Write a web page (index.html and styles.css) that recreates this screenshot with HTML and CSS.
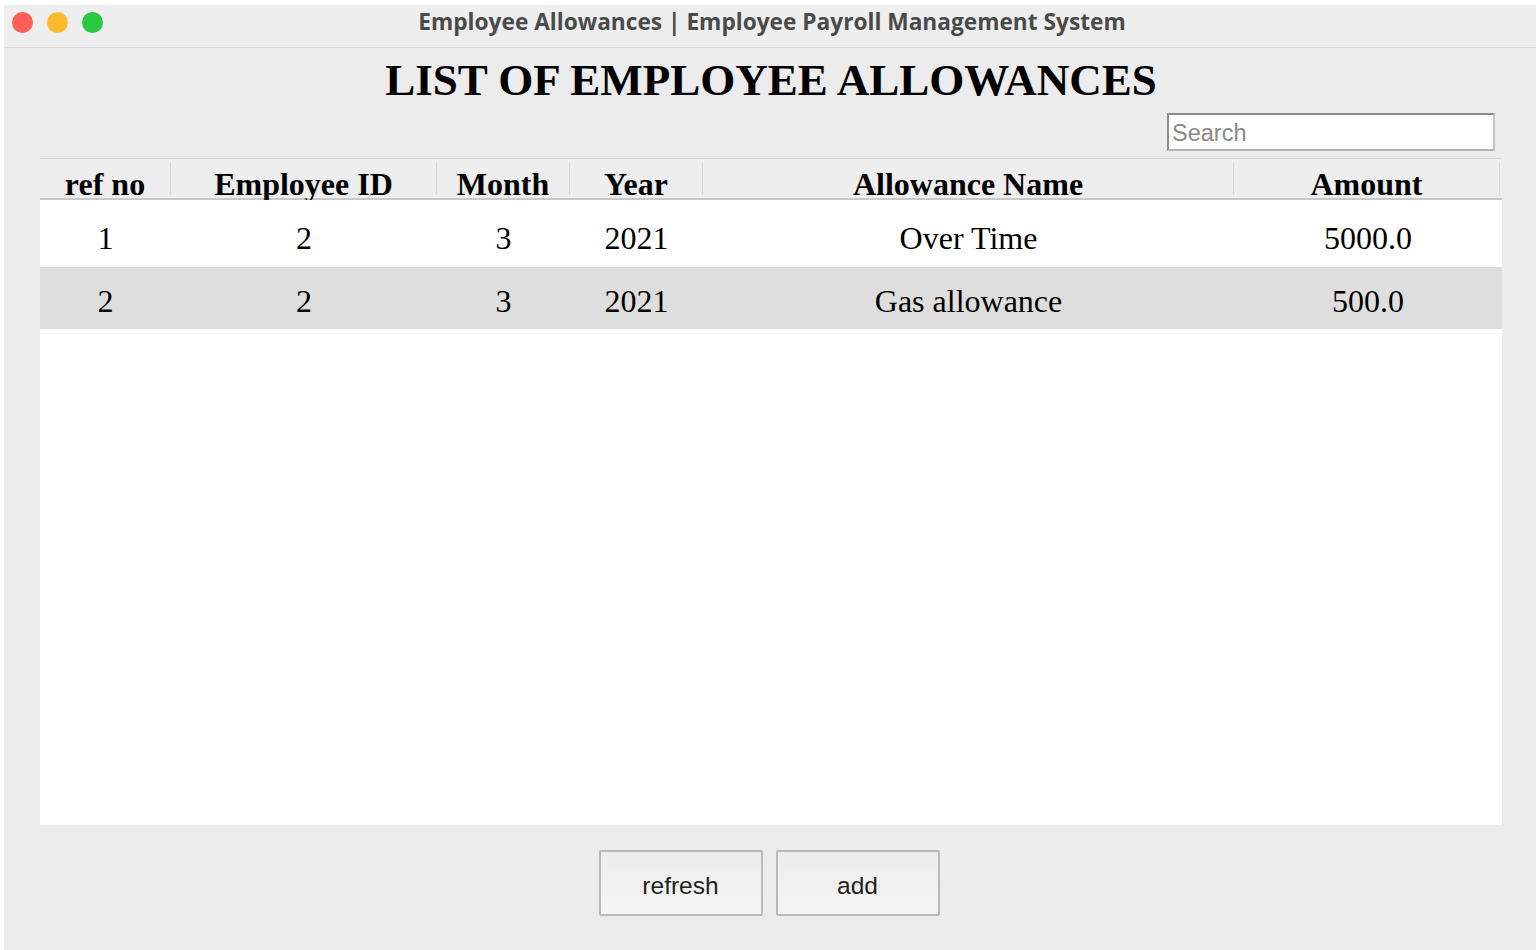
FILE: index.html
```html
<!DOCTYPE html>
<html>
<head>
<meta charset="utf-8">
<title>Employee Allowances</title>
<link rel="stylesheet" href="styles.css">
</head>
<body>
<div class="window">
  <div class="titlebar">
    <div class="lights">
      <span class="light red"></span>
      <span class="light yellow"></span>
      <span class="light green"></span>
    </div>
    <div class="wintitle">Employee Allowances | Employee Payroll Management System</div>
  </div>
  <div class="content">
    <h1 class="heading">LIST OF EMPLOYEE ALLOWANCES</h1>
    <div class="searchrow">
      <div class="search">Search</div>
    </div>
    <div class="table">
      <div class="thead">
        <div class="th">ref no</div>
        <div class="th">Employee ID</div>
        <div class="th">Month</div>
        <div class="th">Year</div>
        <div class="th">Allowance Name</div>
        <div class="th">Amount</div>
      </div>
      <div class="tr r1">
        <div class="td">1</div>
        <div class="td">2</div>
        <div class="td">3</div>
        <div class="td">2021</div>
        <div class="td">Over Time</div>
        <div class="td">5000.0</div>
      </div>
      <div class="tr r2">
        <div class="td">2</div>
        <div class="td">2</div>
        <div class="td">3</div>
        <div class="td">2021</div>
        <div class="td">Gas allowance</div>
        <div class="td">500.0</div>
      </div>
    </div>
    <div class="buttons">
      <button class="btn">refresh</button>
      <button class="btn">add</button>
    </div>
  </div>
</div>
</body>
</html>
```

FILE: styles.css
```css
html, body {
  margin: 0;
  padding: 0;
  background: #ffffff;
}
body {
  width: 1536px;
  height: 950px;
  overflow: hidden;
}
.window {
  margin: 5px 0 0 4px;
  width: 1532px;
  height: 945px;
  background: #ececec;
  display: flex;
  flex-direction: column;
}
.titlebar {
  height: 42px;
  border-bottom: 1px solid #d7d7d7;
  background: #eeeeee;
  display: flex;
  align-items: flex-start;
  position: relative;
}
.lights {
  display: flex;
  gap: 14px;
  padding-left: 8px;
  padding-top: 7px;
}
.light {
  width: 21px;
  height: 21px;
  border-radius: 50%;
  display: block;
}
.red { background: #fe5f57; }
.yellow { background: #febb2e; }
.green { background: #29c840; }
.wintitle {
  position: absolute;
  left: 0;
  right: 0;
  top: 0;
  height: 42px;
  line-height: 33px;
  text-align: center;
  font-family: "Open Sans", "Liberation Sans", sans-serif;
  font-weight: 700;
  font-size: 22.7px;
  color: #4a4a4a;
  padding-left: 4px;
}
.content {
  flex: 1;
  display: flex;
  flex-direction: column;
  padding: 0 34px 0 36px;
}
.heading {
  margin: 4px 0 0 0;
  height: 56px;
  line-height: 56px;
  text-align: center;
  font-family: "Liberation Serif", "Times New Roman", serif;
  font-weight: bold;
  font-size: 45px;
  color: #000;
}
.searchrow {
  display: flex;
  justify-content: flex-end;
  margin-top: 5px;
  padding-right: 7px;
}
.search {
  box-sizing: border-box;
  width: 328px;
  height: 38px;
  background: #ffffff;
  border-top: 2px solid #8d8d8d;
  border-left: 2px solid #8d8d8d;
  border-right: 2px solid #c4c4c4;
  border-bottom: 2px solid #b4b4b4;
  font-family: "Liberation Sans", Arial, sans-serif;
  font-size: 23.5px;
  color: #8a8a8a;
  line-height: 36px;
  padding-left: 3px;
}
.table {
  margin-top: 7px;
  height: 667px;
  background: #ffffff;
  display: flex;
  flex-direction: column;
}
.thead, .tr {
  display: grid;
  grid-template-columns: 131px 266px 133px 133px 531px 1fr;
}
.thead {
  box-sizing: border-box;
  height: 42px;
  background: #eeeeee;
  border-top: 1px solid #d5d5d5;
  border-bottom: 2px solid #c8c8c8;
}
.th {
  font-family: "Liberation Serif", "Times New Roman", serif;
  font-weight: bold;
  font-size: 32px;
  color: #000;
  text-align: center;
  line-height: 44px;
  margin: 3px 0 3px 0;
  height: 33px;
  border-right: 1px solid #d9d9d9;
  overflow: visible;
}
.th:last-child {
  margin-right: 2px;
}
.tr .td {
  font-family: "Liberation Serif", "Times New Roman", serif;
  font-size: 32px;
  color: #000;
  text-align: center;
}
.r1 {
  height: 67px;
  background: #ffffff;
}
.r1 .td { line-height: 77px; }
.r2 {
  height: 62px;
  background: #dedede;
}
.r2 .td { line-height: 68px; }
.buttons {
  display: flex;
  justify-content: center;
  gap: 13px;
  margin-top: 25px;
  padding-left: 0px;
  padding-right: 4px;
}
.btn {
  width: 164px;
  height: 66px;
  box-sizing: border-box;
  border: 2px solid #b9b9b9;
  border-radius: 2px;
  background: linear-gradient(#ececec, #f5f5f5);
  font-family: "Liberation Sans", Arial, sans-serif;
  font-size: 24.5px;
  color: #1f1f1f;
  padding: 6px 0 0 0;
  margin: 0;
}
```
